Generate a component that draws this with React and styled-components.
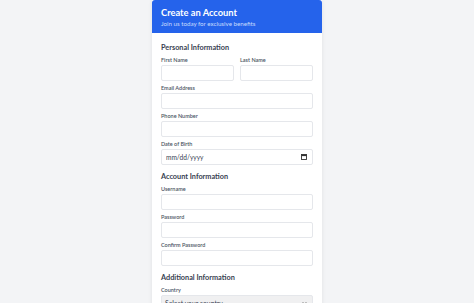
import React from "react";
import styled, { createGlobalStyle } from "styled-components";

const Global = createGlobalStyle`
  html, body { margin: 0; padding: 0; background: #f3f4f6; }
  body { font-family: Lato, "Noto Sans", sans-serif; overflow: hidden; }
  * { box-sizing: border-box; }
`;

const Page = styled.div`
  display: flex;
  justify-content: center;
  min-height: 303px;
`;

const Card = styled.div`
  width: 170px;
  background: #fff;
  box-shadow: 0 1px 4px rgba(0, 0, 0, 0.08);
  border-radius: 0 0 3px 3px;
`;

const Header = styled.div`
  background: #2563eb;
  padding: 6px 9px 0;
  height: 33px;
  border-radius: 3px 3px 0 0;
`;

const Title = styled.h1`
  margin: 0;
  font-size: 9.3px;
  line-height: 13px;
  font-weight: 700;
  color: #fff;
`;

const Subtitle = styled.p`
  margin: 1px 0 0;
  font-size: 6.2px;
  line-height: 8px;
  color: #c7dcfd;
`;

const Body = styled.div`
  padding: 10px 9px 0;
`;

const Section = styled.div`
  & + & { margin-top: 7px; }
`;

const SectionTitle = styled.h2`
  margin: 0 0 3px;
  font-size: 7.3px;
  line-height: 10px;
  font-weight: 700;
  color: #374151;
`;

const Row = styled.div`
  display: grid;
  grid-template-columns: 1fr 1fr;
  gap: 6px;
`;

const Field = styled.div`
  display: flex;
  flex-direction: column;
  margin-bottom: 3px;
`;

const Label = styled.label`
  font-size: 5.5px;
  line-height: 8px;
  margin-bottom: 1px;
  color: #4b5563;
  font-weight: 600;
`;

const InputWrap = styled.div`
  position: relative;
`;

const Input = styled.input`
  display: block;
  height: 16px;
  width: 100%;
  border: 1px solid #e5e7eb;
  border-radius: 2px;
  background: #fff;
  padding: 0 4px;
  font-family: inherit;
  font-size: 6.6px;
  color: #374151;
  outline: none;
  &::placeholder { color: #374151; }
`;

const Select = styled.select`
  display: block;
  appearance: none;
  height: 16px;
  width: 100%;
  border: 1px solid #e5e7eb;
  border-radius: 2px;
  background: #f0f0f1;
  padding: 0 3px;
  font-family: inherit;
  font-size: 6.8px;
  color: #374151;
`;

const TrailingIcon = styled.svg`
  position: absolute;
  right: 6px;
  top: 50%;
  transform: translateY(-50%);
  pointer-events: none;
`;

const TextField = ({ label, type = "text" }) => (
  <Field>
    <Label>{label}</Label>
    <Input type={type} />
  </Field>
);

export default function App() {
  return (
    <>
      <Global />
      <Page>
        <Card>
          <Header>
            <Title>Create an Account</Title>
            <Subtitle>Join us today for exclusive benefits</Subtitle>
          </Header>
          <Body>
            <Section>
              <SectionTitle>Personal Information</SectionTitle>
              <Row>
                <TextField label="First Name" />
                <TextField label="Last Name" />
              </Row>
              <TextField label="Email Address" type="email" />
              <TextField label="Phone Number" type="tel" />
              <Field>
                <Label>Date of Birth</Label>
                <InputWrap>
                  <Input type="text" placeholder="mm/dd/yyyy" />
                  <TrailingIcon width="6" height="6" viewBox="0 0 6 6">
                    <rect x="0.5" y="0.5" width="5" height="5" fill="none" stroke="#333" strokeWidth="0.9" />
                    <rect x="0.5" y="0.5" width="5" height="1.6" fill="#333" />
                  </TrailingIcon>
                </InputWrap>
              </Field>
            </Section>
            <Section>
              <SectionTitle>Account Information</SectionTitle>
              <TextField label="Username" />
              <TextField label="Password" type="password" />
              <TextField label="Confirm Password" type="password" />
            </Section>
            <Section>
              <SectionTitle>Additional Information</SectionTitle>
              <Field>
                <Label>Country</Label>
                <InputWrap>
                  <Select defaultValue="">
                    <option value="">Select your country</option>
                  </Select>
                  <TrailingIcon width="5" height="4" viewBox="0 0 5 4">
                    <path d="M0.7 1.2 L2.5 3 L4.3 1.2" fill="none" stroke="#555" strokeWidth="0.8" />
                  </TrailingIcon>
                </InputWrap>
              </Field>
            </Section>
          </Body>
        </Card>
      </Page>
    </>
  );
}
